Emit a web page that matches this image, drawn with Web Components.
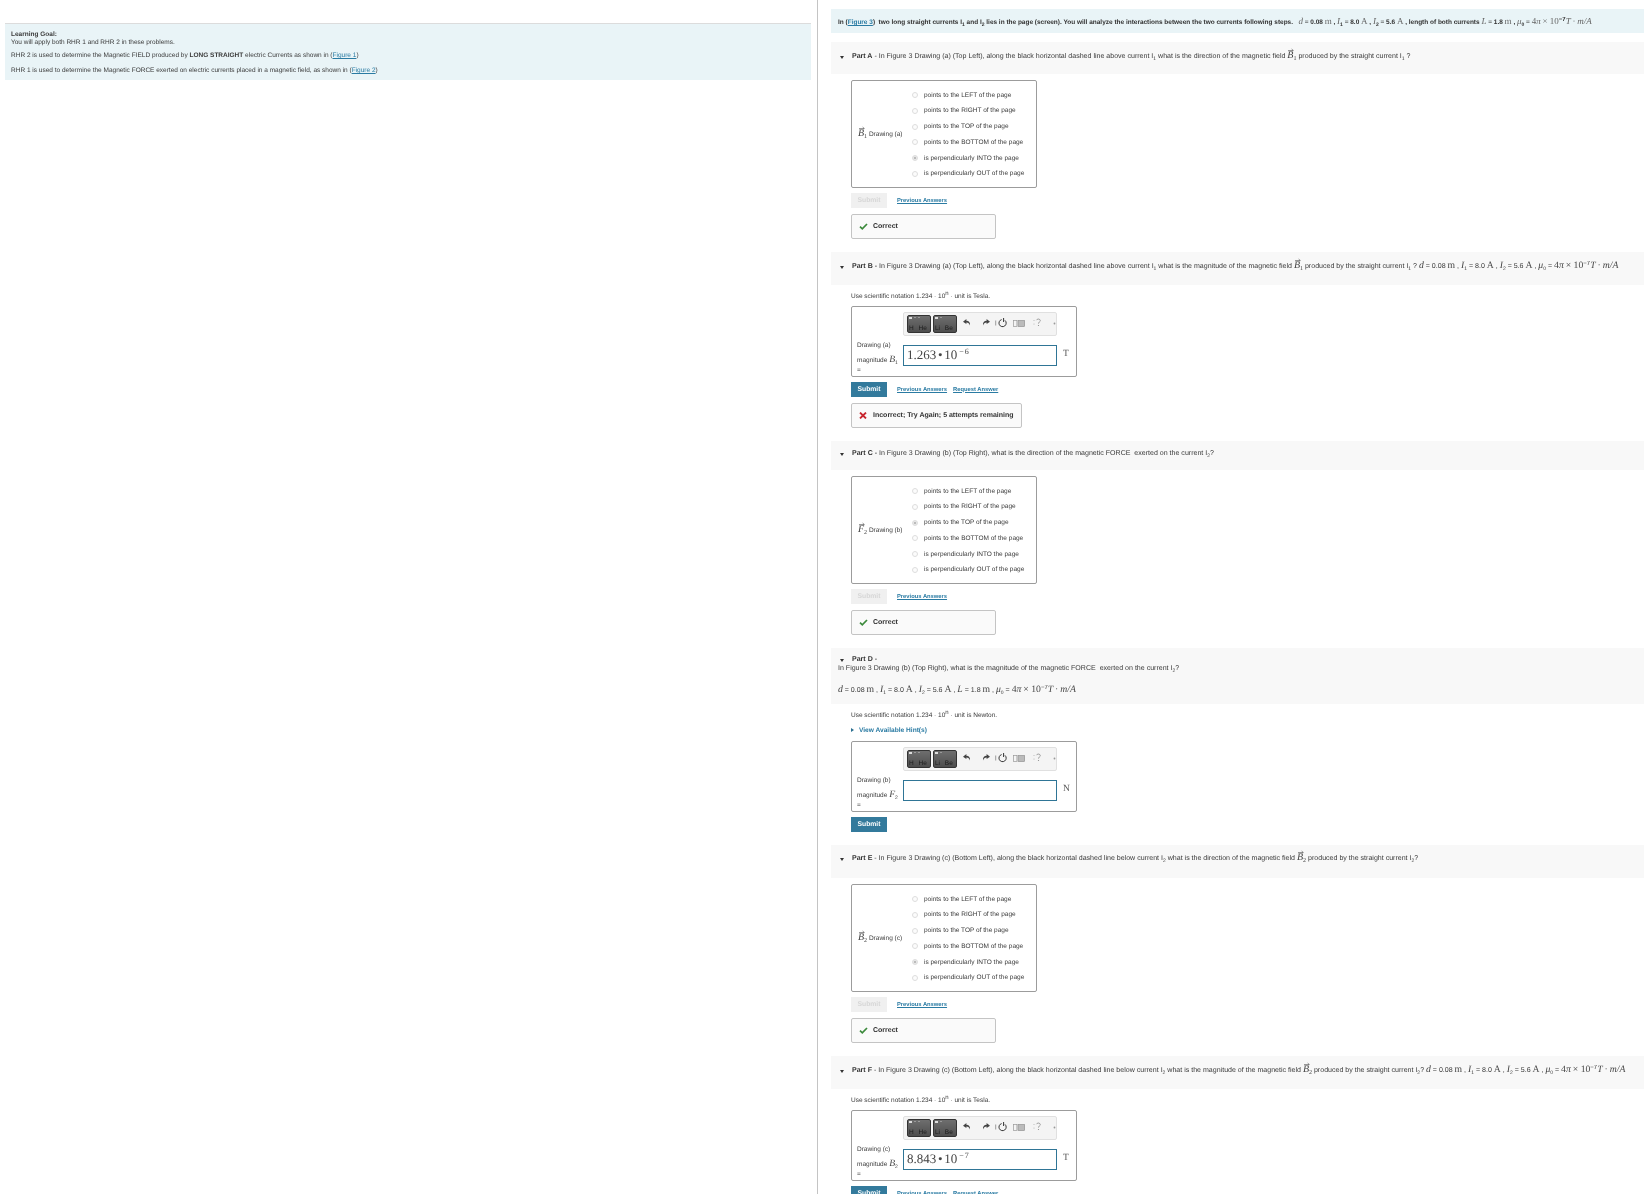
<!DOCTYPE html>
<html lang="en">
<head>
<meta charset="utf-8">
<title>Mastering Physics</title>
<style>
  html, body { margin: 0; height: 100%; overflow: hidden; background: #fff; }
</style>
</head>
<body>
<mp-app>
  <mp-goal slot="left">
    <span slot="title">Learning Goal:</span>
    <span slot="lead">You will apply both RHR 1 and RHR 2 in these problems.</span>
    <span slot="one">RHR 2 is used to determine the Magnetic FIELD produced by <b>LONG STRAIGHT</b> electric Currents as shown in (<mp-link>Figure 1</mp-link>)</span>
    <span slot="two">RHR 1 is used to determine the Magnetic FORCE exerted on electric currents placed in a magnetic field, as shown in (<mp-link>Figure 2</mp-link>)</span>
  </mp-goal>

  <mp-intro slot="right">In (<mp-link>Figure 3</mp-link>) &nbsp;two long straight currents I<mp-sub>1</mp-sub> and I<mp-sub>2</mp-sub> lies in the page (screen). You will analyze the interactions between the two currents following steps. &nbsp;&nbsp;<mp-m>d</mp-m> = 0.08 <mp-m plain>m</mp-m> , <mp-m>I</mp-m><mp-sub>1</mp-sub> = 8.0 <mp-m plain>A</mp-m> , <mp-m>I</mp-m><mp-sub>2</mp-sub> = 5.6 <mp-m plain>A</mp-m> , length of both currents <mp-m>L</mp-m> = 1.8 <mp-m plain>m</mp-m> , <mp-m>μ</mp-m><mp-sub>0</mp-sub> = <mp-m plain>4</mp-m><mp-m>π</mp-m> <mp-m plain>× 10</mp-m><mp-sup>−7</mp-sup><mp-m>T</mp-m> <mp-m plain>·</mp-m> <mp-m>m/A</mp-m></mp-intro>

  <mp-part slot="right" name="Part A" tall first>
    <span slot="title">In Figure 3 Drawing (a) (Top Left), along the black horizontal dashed line above current I<mp-sub>1</mp-sub> what is the direction of the magnetic field <mp-vec s="B" i="1"></mp-vec> produced by the straight current I<mp-sub>1</mp-sub> ?</span>
    <mp-choice selected="4"><mp-vec s="B" i="1"></mp-vec> Drawing (a)</mp-choice>
    <mp-actions disabled></mp-actions>
    <mp-feedback type="correct">Correct</mp-feedback>
  </mp-part>

  <mp-part slot="right" name="Part B" tall>
    <span slot="title">In Figure 3 Drawing (a) (Top Left), along the black horizontal dashed line above current I<mp-sub>1</mp-sub> what is the magnitude of the magnetic field <mp-vec s="B" i="1"></mp-vec> produced by the straight current I<mp-sub>1</mp-sub> ? <mp-m>d</mp-m> = 0.08 <mp-m plain>m</mp-m> , <mp-m>I</mp-m><mp-sub>1</mp-sub> = 8.0 <mp-m plain>A</mp-m> , <mp-m>I</mp-m><mp-sub>2</mp-sub> = 5.6 <mp-m plain>A</mp-m> , <mp-m>μ</mp-m><mp-sub>0</mp-sub> = <mp-m plain>4</mp-m><mp-m>π</mp-m> <mp-m plain>× 10</mp-m><mp-sup>−7</mp-sup><mp-m>T</mp-m> <mp-m plain>·</mp-m> <mp-m>m/A</mp-m></span>
    <mp-note>Use scientific notation 1.234 · 10<mp-sup>n</mp-sup> · unit is Tesla.</mp-note>
    <mp-numeric unit="T" value="1.263 • 10" exp="−6"><span slot="top">Drawing (a)</span>magnitude <mp-m>B</mp-m><mp-sub>1</mp-sub></mp-numeric>
    <mp-actions request></mp-actions>
    <mp-feedback type="incorrect">Incorrect; Try Again; 5 attempts remaining</mp-feedback>
  </mp-part>

  <mp-part slot="right" name="Part C">
    <span slot="title">In Figure 3 Drawing (b) (Top Right), what is the direction of the magnetic FORCE &nbsp;exerted on the current I<mp-sub>2</mp-sub>?</span>
    <mp-choice selected="2"><mp-vec s="F" i="2"></mp-vec> Drawing (b)</mp-choice>
    <mp-actions disabled></mp-actions>
    <mp-feedback type="correct">Correct</mp-feedback>
  </mp-part>

  <mp-part slot="right" name="Part D" stacked>
    <span slot="title">In Figure 3 Drawing (b) (Top Right), what is the magnitude of the magnetic FORCE &nbsp;exerted on the current I<mp-sub>2</mp-sub>?</span>
    <span slot="formula"><mp-m>d</mp-m> = 0.08 <mp-m plain>m</mp-m> , <mp-m>I</mp-m><mp-sub>1</mp-sub> = 8.0 <mp-m plain>A</mp-m> , <mp-m>I</mp-m><mp-sub>2</mp-sub> = 5.6 <mp-m plain>A</mp-m> , <mp-m>L</mp-m> = 1.8 <mp-m plain>m</mp-m> , <mp-m>μ</mp-m><mp-sub>0</mp-sub> = <mp-m plain>4</mp-m><mp-m>π</mp-m> <mp-m plain>× 10</mp-m><mp-sup>−7</mp-sup><mp-m>T</mp-m> <mp-m plain>·</mp-m> <mp-m>m/A</mp-m></span>
    <mp-note>Use scientific notation 1.234 · 10<mp-sup>n</mp-sup> · unit is Newton.</mp-note>
    <mp-hints>View Available Hint(s)</mp-hints>
    <mp-numeric unit="N" value=""><span slot="top">Drawing (b)</span>magnitude <mp-m>F</mp-m><mp-sub>2</mp-sub></mp-numeric>
    <mp-actions bare></mp-actions>
  </mp-part>

  <mp-part slot="right" name="Part E" tall>
    <span slot="title">In Figure 3 Drawing (c) (Bottom Left), along the black horizontal dashed line below current I<mp-sub>2</mp-sub> what is the direction of the magnetic field <mp-vec s="B" i="2"></mp-vec> produced by the straight current I<mp-sub>2</mp-sub>?</span>
    <mp-choice selected="4"><mp-vec s="B" i="2"></mp-vec> Drawing (c)</mp-choice>
    <mp-actions disabled></mp-actions>
    <mp-feedback type="correct">Correct</mp-feedback>
  </mp-part>

  <mp-part slot="right" name="Part F" tall>
    <span slot="title">In Figure 3 Drawing (c) (Bottom Left), along the black horizontal dashed line below current I<mp-sub>2</mp-sub> what is the magnitude of the magnetic field <mp-vec s="B" i="2"></mp-vec> produced by the straight current I<mp-sub>2</mp-sub>? <mp-m>d</mp-m> = 0.08 <mp-m plain>m</mp-m> , <mp-m>I</mp-m><mp-sub>1</mp-sub> = 8.0 <mp-m plain>A</mp-m> , <mp-m>I</mp-m><mp-sub>2</mp-sub> = 5.6 <mp-m plain>A</mp-m> , <mp-m>μ</mp-m><mp-sub>0</mp-sub> = <mp-m plain>4</mp-m><mp-m>π</mp-m> <mp-m plain>× 10</mp-m><mp-sup>−7</mp-sup><mp-m>T</mp-m> <mp-m plain>·</mp-m> <mp-m>m/A</mp-m></span>
    <mp-note>Use scientific notation 1.234 · 10<mp-sup>n</mp-sup> · unit is Tesla.</mp-note>
    <mp-numeric unit="T" value="8.843 • 10" exp="−7"><span slot="top">Drawing (c)</span>magnitude <mp-m>B</mp-m><mp-sub>2</mp-sub></mp-numeric>
    <mp-actions request></mp-actions>
  </mp-part>
</mp-app>

<script>
(function() {
  const SANS = '"Liberation Sans", Arial, sans-serif';
  const SERIF = '"Liberation Serif", "Times New Roman", serif';

  // small helper so each class just hands over its markup
  function define(name, render) {
    customElements.define(name, class extends HTMLElement {
      constructor() {
        super();
        this.attachShadow({ mode: 'open' });
      }
      connectedCallback() {
        // trimmed, a leading newline would show as a space in the inline elements
        this.shadowRoot.innerHTML = render(this).trim();
      }
    });
  }

  define('mp-app', () => `
    <style>
      :host {
        display: grid;
        grid-template-columns: 817px 1fr;
        height: 1194px;
        overflow: hidden;
        font-family: ${SANS};
        font-size: 6.5px;
        color: #3a3a3a;
        text-rendering: geometricPrecision;
        filter: blur(.35px);
      }
      .left { display: block; padding: 23px 6px 0 5px; }
      .right {
        border-left: 1px solid #c4c4c4;
        padding: 9px 0 0 13px;
        min-width: 0;
      }
    </style>
    <div class="left"><slot name="left"></slot></div>
    <div class="right"><slot name="right"></slot></div>`);

  define('mp-goal', () => `
    <style>
      :host {
        display: block;
        height: 56px;
        background: #e9f4f7;
        border-top: 1px solid #dcdcdc;
        padding: 0 6px;
        line-height: 8px;
      }
      .title { font-weight: bold; padding-top: 7px; }
      .one { margin-top: 5px; }
      .two { margin-top: 7px; }
    </style>
    <div class="title"><slot name="title"></slot></div>
    <div class="lead"><slot name="lead"></slot></div>
    <div class="one"><slot name="one"></slot></div>
    <div class="two"><slot name="two"></slot></div>`);

  define('mp-link', () => `
    <style>
      :host { color: #2a7ba3; text-decoration: underline; font-weight: inherit; }
    </style><slot></slot>`);

  define('mp-intro', () => `
    <style>
      :host {
        display: block;
        height: 24px;
        box-sizing: border-box;
        padding: 8px 0 0 7px;
        background: #e9f4f7;
        font-size: 6.47px;
        font-weight: bold;
        line-height: 9px;
        white-space: nowrap;
        color: #333;
        --m-size: 9px;
        --m-color: #666;
      }
    </style><slot></slot>`);

  define('mp-m', el => `
    <style>
      :host {
        font-family: ${SERIF};
        font-style: ${el.hasAttribute('plain') ? 'normal' : 'italic'};
        font-weight: normal;
        font-size: var(--m-size, 9.7px);
        color: var(--m-color, #444);
      }
    </style><slot></slot>`);

  define('mp-sub', () => `
    <style>
      :host { font-size: 5px; vertical-align: -2px; line-height: 0; }
    </style><slot></slot>`);

  define('mp-sup', () => `
    <style>
      :host { font-size: 6px; vertical-align: 3px; line-height: 0; }
    </style><slot></slot>`);

  define('mp-vec', el => `
    <style>
      :host {
        display: inline-block;
        position: relative;
        font-family: ${SERIF};
        font-size: 10px;
        line-height: 8px;
        color: #444;
      }
      i { font-style: italic; }
      sub { font-size: 6px; line-height: 0; vertical-align: -2px; font-style: normal; }
      svg { position: absolute; left: 1px; top: -4px; }
    </style>
    <svg width="6" height="4" viewBox="0 0 6 4"><path d="M0 2.5H5M3.6 1L5.4 2.5L3.6 3.6" fill="none" stroke="#555" stroke-width=".6"/></svg>
    <i>${el.getAttribute('s')}</i><sub>${el.getAttribute('i')}</sub>`);

  define('mp-part', el => {
    const stacked = el.hasAttribute('stacked');
    const tall = el.hasAttribute('tall');
    const first = el.hasAttribute('first');
    return `
    <style>
      :host { display: block; margin: ${first ? 9 : 13}px 0 ${first ? 1 : 0}px; }
      .head {
        background: #f8f8f8;
        box-sizing: border-box;
        height: ${stacked ? 56 : first ? 32 : tall ? 33 : 29}px;
        padding: ${stacked ? 7 : first ? 10 : tall ? 9 : 8}px 0 0 ${stacked ? 7 : 9}px;
        font-size: 7.05px;
        line-height: 9px;
        white-space: nowrap;
      }
      .caret {
        display: inline-block;
        width: 0; height: 0;
        margin: 0 6px 0 ${stacked ? 2 : 0}px;
        border: 2.6px solid transparent;
        border-top: 3.4px solid #333;
        border-bottom: 0;
        vertical-align: -1px;
      }
      b { color: #333; }
      .formula { margin-top: 12px; }
      .body { padding: 6px 0 0 20px; }
    </style>
    <div class="head">
      <span class="caret"></span>
      <b>${el.getAttribute('name')}</b> - ${stacked ? '<div><slot name="title"></slot></div><div class="formula"><slot name="formula"></slot></div>' : '<slot name="title"></slot>'}
    </div>
    <div class="body"><slot></slot></div>`;
  });

  const CHOICES = [
    'points to the LEFT of the page',
    'points to the RIGHT of the page',
    'points to the TOP of the page',
    'points to the BOTTOM of the page',
    'is perpendicularly INTO the page',
    'is perpendicularly OUT of the page'
  ];

  define('mp-choice', el => {
    const picked = +el.getAttribute('selected');
    const rows = CHOICES.map((text, i) => `
      <li class="${i === picked ? 'on' : ''}"><span class="radio"></span>${text}</li>`).join('');
    return `
    <style>
      :host {
        display: flex;
        align-items: center;
        width: 186px;
        height: 108px;
        box-sizing: border-box;
        border: 1px solid #9c9c9c;
        border-radius: 2px;
        padding-left: 6px;
      }
      .label { width: 54px; flex: none; white-space: nowrap; }
      ul { list-style: none; margin: 1px 0 0; padding: 0; }
      li { display: flex; align-items: center; height: 15.8px; white-space: nowrap; }
      .radio {
        width: 6px; height: 6px;
        margin-right: 6px;
        border: .5px solid #ddd;
        border-radius: 50%;
        background: #fcfcfc;
        box-sizing: border-box;
      }
      .on .radio { background: radial-gradient(circle, #bbb 45%, #e8e8e8 55%); }
    </style>
    <div class="label"><slot></slot></div>
    <ul>${rows}</ul>`;
  });

  define('mp-actions', el => {
    const off = el.hasAttribute('disabled');
    const links = el.hasAttribute('bare') ? '' :
      '<a>Previous Answers</a>' + (el.hasAttribute('request') ? '<a>Request Answer</a>' : '');
    return `
    <style>
      :host {
        display: flex;
        align-items: center;
        height: 15px;
        margin-top: 5px;
        gap: 6px;
      }
      button {
        all: unset;
        width: 36px;
        height: 15px;
        margin-right: 4px;
        text-align: center;
        font-size: 6.8px;
        font-weight: bold;
        line-height: 14px;
        background: ${off ? '#f0f0f0' : '#337a9c'};
        color: ${off ? '#d6d6d6' : '#fff'};
      }
      a { color: #2a7ba3; font-size: 5.8px; font-weight: bold; text-decoration: underline; }
    </style>
    <button>Submit</button>${links}`;
  });

  define('mp-feedback', el => {
    const ok = el.getAttribute('type') === 'correct';
    const icon = ok
      ? '<svg width="9" height="7" viewBox="0 0 9 7"><path d="M1 3.6L3.3 5.8L8 1" fill="none" stroke="#3c8a3c" stroke-width="1.7"/></svg>'
      : '<svg width="8" height="7" viewBox="0 0 8 7"><path d="M1 .6L7 6.4M7 .6L1 6.4" fill="none" stroke="#c8262e" stroke-width="1.9"/></svg>';
    return `
    <style>
      :host {
        display: inline-flex;
        align-items: center;
        gap: ${ok ? 5 : 6}px;
        box-sizing: border-box;
        height: 25px;
        margin-top: 6px;
        padding: 0 7px;
        min-width: 145px;
        border: 1px solid #c4c4c4;
        border-radius: 2px;
        background: #fafafa;
        font-size: 7px;
        font-weight: bold;
        color: #333;
        vertical-align: top;
      }
    </style>${icon}<span><slot></slot></span>`;
  });

  define('mp-note', () => `
    <style>
      :host { display: block; height: 15px; line-height: 11px; font-size: 6.5px; }
    </style><slot></slot>`);

  define('mp-hints', () => `
    <style>
      :host {
        display: block;
        height: 10px;
        margin: 1px 0 5px;
        color: #2a7ba3;
        font-weight: bold;
        font-size: 6.6px;
        line-height: 9px;
      }
      span {
        display: inline-block;
        width: 0; height: 0;
        margin-right: 5px;
        border: 2.4px solid transparent;
        border-left: 3.2px solid #2a6f90;
        border-right: 0;
      }
    </style><span></span><slot></slot>`);

  define('mp-toolbar', () => `
    <style>
      :host {
        display: flex;
        align-items: flex-start;
        width: 154px;
        height: 24px;
        box-sizing: border-box;
        background: #f4f4f4;
        border: 1px solid #e0e0e0;
        border-radius: 2px;
        padding: 2px 0 0 3px;
        color: #333;
      }
      .tpl {
        width: 24px;
        height: 18px;
        box-sizing: border-box;
        margin-right: 2px;
        border-radius: 2px;
        border: 1px solid #333;
        background: linear-gradient(#6e6e6e, #4e4e4e);
        font-size: 6.5px;
        line-height: 7px;
        color: #1c1c1c;
        white-space: nowrap;
        overflow: hidden;
        word-spacing: 3px;
        padding-left: 1px;
      }
      .marks { display: flex; gap: 2px; height: 9px; padding-top: 1px; box-sizing: border-box; }
      .marks i { display: block; width: 3px; height: 2px; background: #ddd; }
      .marks i + i { background: #999; width: 2px; height: 1px; }
      svg { flex: none; display: block; }
    </style>
    <div class="tpl"><div class="marks"><i></i><i></i><i></i></div>H He</div>
    <div class="tpl"><div class="marks"><i></i><i></i></div>Li Be</div>
    <svg style="margin:4px 0 0 4px" width="8" height="7" viewBox="0 0 8 7"><path d="M3.4 0L0 2.8L3.4 5V3.4C5.2 3.4 6.3 4.4 7 6.5C7.4 3.6 5.8 1.9 3.4 1.8Z" fill="#444"/></svg>
    <svg style="margin:4px 0 0 11px" width="8" height="7" viewBox="0 0 8 7"><path d="M4.6 0L8 2.8L4.6 5V3.4C2.8 3.4 1.7 4.4 1 6.5C.6 3.6 2.2 1.9 4.6 1.8Z" fill="#444"/></svg>
    <svg style="margin:3px 0 0 5px" width="14" height="10" viewBox="0 0 14 10"><path d="M.7 2.5V7.5" stroke="#777" stroke-width=".7"/><path d="M6.6 1.6A3.6 3.6 0 1 0 10 2.4" fill="none" stroke="#333" stroke-width="1"/><path d="M8.6 0V4" stroke="#333" stroke-width="1"/></svg>
    <svg style="margin:5px 0 0 4px" width="12" height="7" viewBox="0 0 12 7"><rect x=".5" y=".5" width="3.4" height="6" fill="none" stroke="#999" stroke-width=".7"/><rect x="5" y=".5" width="6.6" height="6" fill="#bbb" stroke="#888" stroke-width=".6"/></svg>
    <svg style="margin:3px 0 0 8px" width="9" height="9" viewBox="0 0 9 9"><circle cx="1" cy="2.5" r=".5" fill="#aaa"/><circle cx="1" cy="6" r=".5" fill="#aaa"/><path d="M3.5 2.2C3.8 .6 7.3 .6 7.3 2.6C7.3 4 5.5 4 5.5 5.6" fill="none" stroke="#888" stroke-width=".8"/><circle cx="5.5" cy="7.5" r=".6" fill="#888"/></svg>
    <svg style="margin:7px 0 0 11px" width="3" height="3" viewBox="0 0 3 3"><circle cx="1.5" cy="1.5" r=".9" fill="#999"/></svg>`);

  define('mp-numeric', el => {
    const exp = el.getAttribute('exp');
    return `
    <style>
      :host {
        display: block;
        width: 226px;
        height: 71px;
        box-sizing: border-box;
        border: 1px solid #9c9c9c;
        border-radius: 2px;
        padding: 5px 0 0 51px;
      }
      .row { display: flex; margin: 9px 0 0 -46px; }
      .label { width: 46px; flex: none; line-height: 14px; margin-top: -6px; white-space: nowrap; }
      .eq { line-height: 6px; }
      .value {
        width: 154px;
        height: 21px;
        box-sizing: border-box;
        border: 1px solid #2f7596;
        font-family: ${SERIF};
        font-size: 13px;
        line-height: 18px;
        padding-left: 3px;
        color: #444;
        white-space: nowrap;
        word-spacing: -1.5px;
      }
      sup { font-size: 8px; line-height: 0; vertical-align: 5px; margin-left: 2px; letter-spacing: 1px; }
      .unit { font-family: ${SERIF}; font-size: 9.5px; margin: 4px 0 0 6px; color: #555; }
    </style>
    <mp-toolbar></mp-toolbar>
    <div class="row">
      <div class="label"><slot name="top"></slot><br><slot></slot><div class="eq">=</div></div>
      <div class="value">${el.getAttribute('value')}${exp ? `<sup>${exp}</sup>` : ''}</div>
      <div class="unit">${el.getAttribute('unit')}</div>
    </div>`;
  });
})();
</script>
</body>
</html>
